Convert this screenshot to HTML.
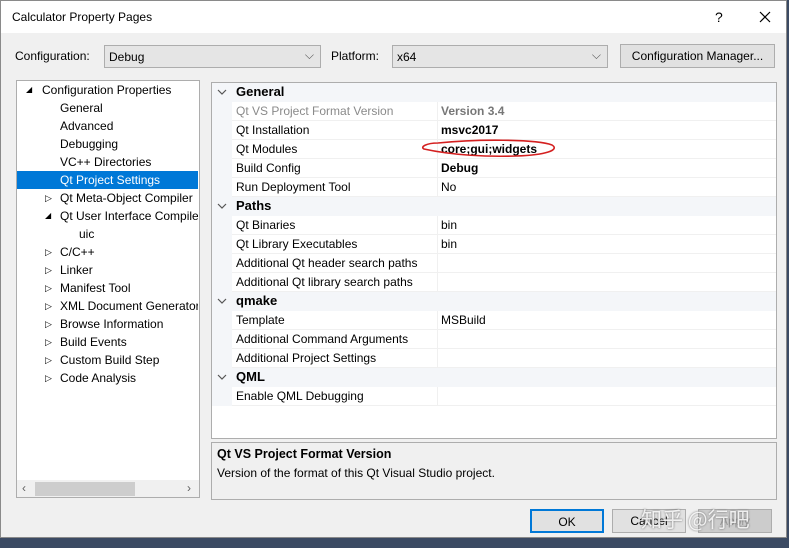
<!DOCTYPE html><html><head><style>
*{margin:0;padding:0;box-sizing:border-box}
body{width:789px;height:548px;overflow:hidden;background:#3b4a63;font-family:"Liberation Sans",sans-serif;font-size:12px;color:#000;position:relative}
.a{position:absolute;white-space:nowrap}
#dlg{position:absolute;left:0;top:0;width:787px;height:538px;background:#f0f0f0;border:1px solid #8a8a8a}
.row{position:absolute;left:0;width:564px;height:19px;line-height:18px}
.cat{background:#f4f6f9;font-weight:bold;font-size:13px}
.prop .g{position:absolute;left:0;top:0;width:20px;height:19px;background:#f4f6f9}
.prop .n{position:absolute;left:24px}
.prop .v{position:absolute;left:229px}
.prop{border-bottom:1px solid #f0f0f0}
.vl{position:absolute;left:225px;top:0;width:1px;height:19px;background:#f0f0f0}
.ti{position:absolute;left:0;width:181px;height:18px;line-height:18px}
.btn{position:absolute;height:24px;border:1px solid #adadad;background:#e1e1e1;text-align:center;line-height:22px}
.chev{position:absolute;left:5px;top:4px}
</style></head><body>
<div id="dlg">
<div class="a" style="left:0;top:0;width:785px;height:32px;background:#fff"></div>
<div class="a" style="left:11px;top:9px">Calculator Property Pages</div>
<div class="a" style="left:714px;top:8px;font-size:14px">?</div>
<svg class="a" style="left:758px;top:10px" width="12" height="12"><path d="M1 1L11 11M11 1L1 11" stroke="#000" stroke-width="1.2"/></svg>
<div class="a" style="left:14px;top:48px">Configuration:</div>
<div class="a" style="left:103px;top:44px;width:217px;height:23px;background:#e5e5e5;border:1px solid #adadad;padding:4px 0 0 4px">Debug<span style="position:absolute;right:6px;top:2px;color:#555">⌵</span></div>
<div class="a" style="left:330px;top:48px">Platform:</div>
<div class="a" style="left:391px;top:44px;width:216px;height:23px;background:#e5e5e5;border:1px solid #adadad;padding:4px 0 0 4px">x64<span style="position:absolute;right:6px;top:2px;color:#555">⌵</span></div>
<div class="btn" style="left:619px;top:43px;width:155px;height:24px">Configuration Manager...</div>

<div class="a" style="left:15px;top:79px;width:184px;height:418px;background:#fff;border:1px solid #adadad;font-size:12px">
<div class="ti" style="top:0"><span class="a" style="left:9px;font-size:8px">◢</span><span class="a" style="left:25px">Configuration Properties</span></div>
<div class="ti" style="top:18px"><span class="a" style="left:43px">General</span></div>
<div class="ti" style="top:36px"><span class="a" style="left:43px">Advanced</span></div>
<div class="ti" style="top:54px"><span class="a" style="left:43px">Debugging</span></div>
<div class="ti" style="top:72px"><span class="a" style="left:43px">VC++ Directories</span></div>
<div class="ti" style="top:90px;background:#0078d7;color:#fff"><span class="a" style="left:43px">Qt Project Settings</span></div>
<div class="ti" style="top:108px"><span class="a" style="left:28px;font-size:9px">▷</span><span class="a" style="left:43px">Qt Meta-Object Compiler</span></div>
<div class="ti" style="top:126px;overflow:hidden"><span class="a" style="left:28px;font-size:8px">◢</span><span class="a" style="left:43px">Qt User Interface Compiler</span></div>
<div class="ti" style="top:144px"><span class="a" style="left:62px">uic</span></div>
<div class="ti" style="top:162px"><span class="a" style="left:28px;font-size:9px">▷</span><span class="a" style="left:43px">C/C++</span></div>
<div class="ti" style="top:180px"><span class="a" style="left:28px;font-size:9px">▷</span><span class="a" style="left:43px">Linker</span></div>
<div class="ti" style="top:198px"><span class="a" style="left:28px;font-size:9px">▷</span><span class="a" style="left:43px">Manifest Tool</span></div>
<div class="ti" style="top:216px;overflow:hidden"><span class="a" style="left:28px;font-size:9px">▷</span><span class="a" style="left:43px">XML Document Generator</span></div>
<div class="ti" style="top:234px"><span class="a" style="left:28px;font-size:9px">▷</span><span class="a" style="left:43px">Browse Information</span></div>
<div class="ti" style="top:252px"><span class="a" style="left:28px;font-size:9px">▷</span><span class="a" style="left:43px">Build Events</span></div>
<div class="ti" style="top:270px"><span class="a" style="left:28px;font-size:9px">▷</span><span class="a" style="left:43px">Custom Build Step</span></div>
<div class="ti" style="top:288px"><span class="a" style="left:28px;font-size:9px">▷</span><span class="a" style="left:43px">Code Analysis</span></div>
<div class="a" style="left:0;top:399px;width:182px;height:17px;background:#f0f0f0"></div>
<div class="a" style="left:18px;top:401px;width:100px;height:14px;background:#cdcdcd"></div>
<div class="a" style="left:5px;top:400px;color:#606060">‹</div>
<div class="a" style="left:170px;top:400px;color:#606060">›</div>
</div>

<div class="a" style="left:210px;top:81px;width:566px;height:357px;background:#fff;border:1px solid #adadad">
<div class="row cat" style="top:0"><svg class="chev" width="10" height="10"><path d="M1 3L5 7L9 3" fill="none" stroke="#555" stroke-width="1.2"/></svg><span class="a" style="left:24px">General</span></div>
<div class="row prop" style="top:19px"><div class="g"></div><span class="n" style="color:#8a8a8a">Qt VS Project Format Version</span><div class="vl"></div><span class="v" style="font-weight:bold;color:#777">Version 3.4</span></div>
<div class="row prop" style="top:38px"><div class="g"></div><span class="n">Qt Installation</span><div class="vl"></div><span class="v" style="font-weight:bold">msvc2017</span></div>
<div class="row prop" style="top:57px"><div class="g"></div><span class="n">Qt Modules</span><div class="vl"></div><span class="v" style="font-weight:bold">core;gui;widgets</span></div>
<div class="row prop" style="top:76px"><div class="g"></div><span class="n">Build Config</span><div class="vl"></div><span class="v" style="font-weight:bold">Debug</span></div>
<div class="row prop" style="top:95px"><div class="g"></div><span class="n">Run Deployment Tool</span><div class="vl"></div><span class="v">No</span></div>
<div class="row cat" style="top:114px"><svg class="chev" width="10" height="10"><path d="M1 3L5 7L9 3" fill="none" stroke="#555" stroke-width="1.2"/></svg><span class="a" style="left:24px">Paths</span></div>
<div class="row prop" style="top:133px"><div class="g"></div><span class="n">Qt Binaries</span><div class="vl"></div><span class="v">bin</span></div>
<div class="row prop" style="top:152px"><div class="g"></div><span class="n">Qt Library Executables</span><div class="vl"></div><span class="v">bin</span></div>
<div class="row prop" style="top:171px"><div class="g"></div><span class="n">Additional Qt header search paths</span><div class="vl"></div></div>
<div class="row prop" style="top:190px"><div class="g"></div><span class="n">Additional Qt library search paths</span><div class="vl"></div></div>
<div class="row cat" style="top:209px"><svg class="chev" width="10" height="10"><path d="M1 3L5 7L9 3" fill="none" stroke="#555" stroke-width="1.2"/></svg><span class="a" style="left:24px">qmake</span></div>
<div class="row prop" style="top:228px"><div class="g"></div><span class="n">Template</span><div class="vl"></div><span class="v">MSBuild</span></div>
<div class="row prop" style="top:247px"><div class="g"></div><span class="n">Additional Command Arguments</span><div class="vl"></div></div>
<div class="row prop" style="top:266px"><div class="g"></div><span class="n">Additional Project Settings</span><div class="vl"></div></div>
<div class="row cat" style="top:285px"><svg class="chev" width="10" height="10"><path d="M1 3L5 7L9 3" fill="none" stroke="#555" stroke-width="1.2"/></svg><span class="a" style="left:24px">QML</span></div>
<div class="row prop" style="top:304px"><div class="g"></div><span class="n">Enable QML Debugging</span><div class="vl"></div></div>
</div>
<svg class="a" style="left:415px;top:136px" width="145" height="26"><path d="M22 6 C60 2 120 2 136 8 C144 13 130 18 100 19 C70 20 35 18 8 12 C4 10 10 6 22 6" fill="none" stroke="#d42020" stroke-width="1.6"/></svg>

<div class="a" style="left:210px;top:441px;width:566px;height:58px;border:1px solid #adadad;background:#f0f0f0">
<div class="a" style="left:5px;top:4px;font-weight:bold;font-size:12.5px">Qt VS Project Format Version</div>
<div class="a" style="left:5px;top:23px">Version of the format of this Qt Visual Studio project.</div>
</div>

<div class="btn" style="left:529px;top:508px;width:74px;border:2px solid #0078d7">OK</div>
<div class="btn" style="left:611px;top:508px;width:74px">Cancel</div>
<div class="btn" style="left:697px;top:508px;width:74px;color:#999;background:#ccc">Apply</div>
<div class="a" style="left:640px;top:503px;font-family:'Noto Sans CJK SC',sans-serif;font-size:21px;color:rgba(255,255,255,.85);text-shadow:0 0 2px #666">知乎 @行吧</div>
</div>
</body></html>
